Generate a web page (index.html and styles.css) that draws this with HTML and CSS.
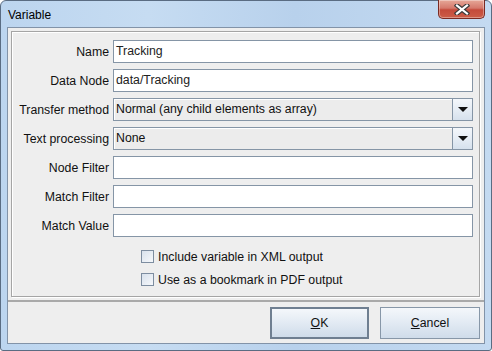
FILE: index.html
```html
<!DOCTYPE html>
<html>
<head>
<meta charset="utf-8">
<link rel="stylesheet" href="styles.css">
</head>
<body>
<div class="window">
  <div class="titlebar">
    <span class="title">Variable</span>
    <div class="close">
      <svg width="16" height="11" viewBox="0 0 16 11">
        <path d="M3 1.5 L13 9.5 M13 1.5 L3 9.5" stroke="#3a3a3a" stroke-width="4.5" stroke-linecap="square"/>
        <path d="M3 1.5 L13 9.5 M13 1.5 L3 9.5" stroke="#ffffff" stroke-width="2.2" stroke-linecap="square"/>
      </svg>
    </div>
  </div>
  <div class="content">
    <div class="panel">
      <div class="form">
        <label class="lbl">Name</label>
        <div class="field">Tracking</div>
        <label class="lbl">Data Node</label>
        <div class="field">data/Tracking</div>
        <label class="lbl">Transfer method</label>
        <div class="combo"><span class="combo-text">Normal (any child elements as array)</span><span class="arrow"></span></div>
        <label class="lbl">Text processing</label>
        <div class="combo"><span class="combo-text">None</span><span class="arrow"></span></div>
        <label class="lbl">Node Filter</label>
        <div class="field"></div>
        <label class="lbl">Match Filter</label>
        <div class="field"></div>
        <label class="lbl">Match Value</label>
        <div class="field"></div>
      </div>
      <div class="checks">
        <div class="check"><span class="box"></span><span>Include variable in XML output</span></div>
        <div class="check"><span class="box"></span><span>Use as a bookmark in PDF output</span></div>
      </div>
    </div>
    <div class="buttons">
      <div class="btn btn-default"><span><u>O</u>K</span></div>
      <div class="btn btn-cancel"><span><u>C</u>ancel</span></div>
    </div>
  </div>
</div>
</body>
</html>
```

FILE: styles.css
```css
html, body {
  margin: 0;
  padding: 0;
  background: #ffffff;
}
body {
  width: 492px;
  height: 351px;
  overflow: hidden;
  font-family: "Liberation Sans", Arial, sans-serif;
  font-size: 12.3px;
  color: #111;
}
.window {
  box-sizing: border-box;
  width: 492px;
  height: 351px;
  border: 1px solid #5a6c82;
  border-radius: 6px 6px 3px 3px;
  background: linear-gradient(90deg, #bcd5ef 0%, #c6dcf2 30%, #b8d1ec 60%, #c4daf1 100%);
  padding: 0 6px 6px 6px;
  display: flex;
  flex-direction: column;
}
.titlebar {
  height: 26px;
  display: flex;
  align-items: flex-start;
  justify-content: space-between;
}
.title {
  margin-top: 7px;
  margin-left: 1px;
  font-size: 12px;
  color: #000;
}
.close {
  width: 47px;
  height: 19px;
  margin-top: -1px;
  box-sizing: border-box;
  border: 1px solid #7a2a22;
  border-top: none;
  border-radius: 0 0 5px 5px;
  background: linear-gradient(180deg, #e6a898 0%, #d5796c 45%, #c44a3a 55%, #cc5d47 100%);
  box-shadow: inset 0 0 0 1px rgba(255,255,255,0.35);
  display: flex;
  align-items: center;
  justify-content: center;
}
.close svg { display: block; }
.content {
  flex: 1;
  border: 1px solid #8293a8;
  background: #eeeeee;
  display: flex;
  flex-direction: column;
}
.panel {
  margin: 3px 4px 0 3px;
  border: 1px solid #a5a5a5;
  box-shadow: inset 1px 1px 0 #ffffff, 1px 1px 0 #ffffff;
  padding: 8px 6px 5px 1px;
}
.form {
  display: grid;
  grid-template-columns: 96px 1fr;
  column-gap: 4px;
  row-gap: 6px;
}
.lbl {
  text-align: right;
  align-self: center;
  white-space: nowrap;
  color: #111;
}
.field {
  box-sizing: border-box;
  height: 23px;
  background: #ffffff;
  border: 1px solid #8595a6;
  padding: 0 2px;
  line-height: 21px;
  color: #222;
}
.combo {
  box-sizing: border-box;
  height: 23px;
  background: #ececec;
  border: 1px solid #8595a6;
  display: flex;
  align-items: stretch;
}
.combo-text {
  flex: 1;
  padding: 0 2px;
  line-height: 21px;
  color: #111;
  box-shadow: inset 1px 1px 0 #ffffff;
}
.arrow {
  width: 19px;
  border-left: 1px solid #8595a6;
  background: linear-gradient(180deg, #f4f7fb 0%, #e6edf5 50%, #d6e1ed 100%);
  position: relative;
}
.arrow::after {
  content: "";
  position: absolute;
  left: 5px;
  top: 8px;
  border-left: 5px solid transparent;
  border-right: 5px solid transparent;
  border-top: 5px solid #111;
}
.checks {
  margin-top: 8px;
  padding-left: 128px;
  display: flex;
  flex-direction: column;
}
.check {
  height: 23px;
  display: flex;
  align-items: center;
  gap: 4px;
}
.box {
  box-sizing: border-box;
  width: 13px;
  height: 13px;
  border: 1px solid #7d8da0;
  background: linear-gradient(135deg, #d8e1ec 0%, #f6f8fb 100%);
}
.buttons {
  margin-top: 3px;
  border-top: 2px solid #a9a9a9;
  flex: 1;
  display: flex;
  justify-content: flex-end;
  align-items: flex-start;
  padding: 5px 4px 0 0;
  gap: 11px;
}
.btn {
  box-sizing: border-box;
  height: 32px;
  display: flex;
  align-items: center;
  justify-content: center;
  background: linear-gradient(180deg, #f4f7fb 0%, #e2eaf3 50%, #cfdcea 100%);
  color: #111;
}
.btn-default {
  width: 99px;
  border: 2px solid #6f7f91;
}
.btn-cancel {
  width: 100px;
  border: 1px solid #8797a8;
}
```
